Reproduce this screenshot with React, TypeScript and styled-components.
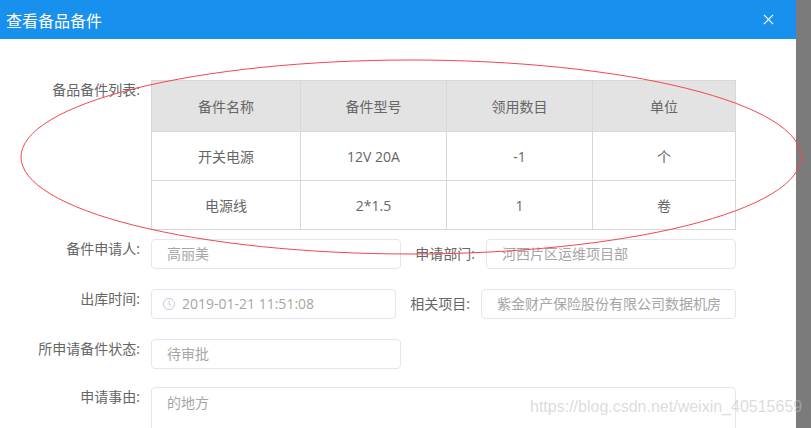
import styled, { createGlobalStyle } from 'styled-components'

const GlobalStyle = createGlobalStyle`
  html, body {
    margin: 0;
    padding: 0;
    height: 428px;
    overflow: hidden;
    background: #7b7b7b;
  }
`

const parts = [
  { name: '开关电源', model: '12V 20A', count: '-1', unit: '个' },
  { name: '电源线', model: '2*1.5', count: '1', unit: '卷' },
]

export default function App() {
  return (
    <>
      <GlobalStyle />
      <Root>
        <Dialog>
          <Header>
            <Title>查看备品备件</Title>
            <CloseIcon viewBox="0 0 12 12">
              <path d="M1 1 L11 11 M11 1 L1 11" />
            </CloseIcon>
          </Header>
          <Body>
            <TableRow>
              <Label>备品备件列表:</Label>
              <Table>
                <thead>
                  <tr>
                    <Th $width={148}>备件名称</Th>
                    <Th $width={145}>备件型号</Th>
                    <Th $width={145}>领用数目</Th>
                    <Th>单位</Th>
                  </tr>
                </thead>
                <tbody>
                  {parts.map((part) => (
                    <tr key={part.name}>
                      <Td>{part.name}</Td>
                      <Td>{part.model}</Td>
                      <Td>{part.count}</Td>
                      <Td>{part.unit}</Td>
                    </tr>
                  ))}
                </tbody>
              </Table>
            </TableRow>
            <FieldRow>
              <Label>备件申请人:</Label>
              <Input>高丽美</Input>
              <SideLabel>申请部门:</SideLabel>
              <Input>河西片区运维项目部</Input>
            </FieldRow>
            <FieldRow>
              <Label>出库时间:</Label>
              <DateInput>
                <ClockIcon viewBox="0 0 14 14">
                  <circle cx="7" cy="7" r="5.6" />
                  <path d="M7 3.6 V7.4 L9.6 8.8" />
                </ClockIcon>
                2019-01-21 11:51:08
              </DateInput>
              <SideLabel>相关项目:</SideLabel>
              <Input>
                <Clipped>紫金财产保险股份有限公司数据机房</Clipped>
              </Input>
            </FieldRow>
            <FieldRow>
              <Label>所申请备件状态:</Label>
              <Input>待审批</Input>
              <Spacer />
            </FieldRow>
            <ReasonRow>
              <Label>申请事由:</Label>
              <TextArea>的地方</TextArea>
            </ReasonRow>
          </Body>
          <Annotation viewBox="0 0 811 428">
            <ellipse cx="411" cy="157" rx="390" ry="97" />
          </Annotation>
          <Watermark>https://blog.csdn.net/weixin_40515659</Watermark>
        </Dialog>
        <Backdrop />
      </Root>
    </>
  )
}

const Root = styled.div`
  display: flex;
  width: 811px;
  height: 428px;
  overflow: hidden;
  font-family: 'Open Sans', 'Noto Sans CJK SC', sans-serif;
`

const Dialog = styled.div`
  position: relative;
  width: 796px;
  height: 428px;
  flex: none;
  background: #ffffff;
`

const Backdrop = styled.div`
  flex: 1;
  background: #7b7b7b;
`

const Header = styled.div`
  display: flex;
  align-items: center;
  justify-content: space-between;
  height: 39px;
  padding: 0 22px 0 6px;
  background: #1890ee;
`

const Title = styled.span`
  color: #ffffff;
  font-size: 16px;
`

const CloseIcon = styled.svg`
  width: 11px;
  height: 11px;
  fill: none;
  stroke: #ffffff;
  stroke-width: 1.4;
`

const Body = styled.div`
  display: flex;
  flex-direction: column;
  padding: 41px 60px 0 0;
  color: #666666;
  font-size: 14px;
`

const TableRow = styled.div`
  display: flex;
  height: 148px;
  margin-bottom: 11px;
`

const FieldRow = styled.div`
  display: flex;
  height: 30px;
  margin-bottom: 20px;
`

const ReasonRow = styled.div`
  display: flex;
  margin-top: -2px;
`

const Label = styled.label`
  flex: none;
  width: 151px;
  padding-right: 11px;
  box-sizing: border-box;
  text-align: right;
  line-height: 20px;
`

const SideLabel = styled.label`
  flex: none;
  width: 85px;
  padding-right: 11px;
  box-sizing: border-box;
  text-align: right;
  line-height: 30px;
  white-space: nowrap;
`

const Table = styled.table`
  width: 585px;
  height: 147px;
  border-collapse: collapse;
  table-layout: fixed;
  border: 1px solid #d8d8dc;
  text-align: center;
`

const Th = styled.th<{ $width?: number }>`
  width: ${({ $width }) => ($width ? `${$width}px` : 'auto')};
  height: 50px;
  padding: 0;
  border: 1px solid #d8d8d8;
  background: #e3e3e3;
  font-weight: 400;
`

const Td = styled.td`
  height: 48px;
  padding: 0;
  border: 1px solid #d8d8d8;
`

const Input = styled.div`
  flex: 1;
  min-width: 0;
  height: 30px;
  box-sizing: border-box;
  padding: 0 15px;
  border: 1px solid #e4e6ef;
  border-radius: 4px;
  color: #a6a6a6;
  line-height: 28px;
  overflow: hidden;
  white-space: nowrap;
`

const DateInput = styled(Input)`
  display: flex;
  align-items: center;
  gap: 6px;
  padding: 0 10px;
`

const Clipped = styled.span`
  display: block;
  overflow: hidden;
`

const ClockIcon = styled.svg`
  width: 14px;
  height: 14px;
  flex: none;
  fill: none;
  stroke: #c6ccd8;
  stroke-width: 1;
`

const Spacer = styled.div`
  width: 335px;
  flex: none;
`

const TextArea = styled.div`
  flex: 1;
  height: 70px;
  box-sizing: border-box;
  padding: 5px 15px;
  border: 1px solid #e4e6ef;
  border-radius: 4px;
  color: #a6a6a6;
  line-height: 20px;
`

const Annotation = styled.svg`
  position: absolute;
  top: 0;
  left: 0;
  width: 811px;
  height: 428px;
  overflow: visible;
  pointer-events: none;
  fill: none;
  stroke: #f0484e;
  stroke-width: 1;
`

const Watermark = styled.div`
  position: absolute;
  left: 530px;
  top: 398px;
  color: rgba(190, 190, 190, 0.55);
  font-family: 'Liberation Sans', sans-serif;
  font-size: 16px;
  white-space: nowrap;
`
